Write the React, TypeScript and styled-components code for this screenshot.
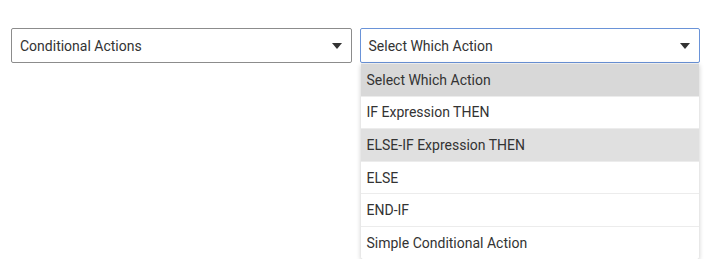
import React from 'react';
import styled, { createGlobalStyle } from 'styled-components';

const GlobalStyle = createGlobalStyle`
  body {
    margin: 0;
    background: #fff;
    font-family: Roboto, "Liberation Sans", sans-serif;
    color: #333;
  }
`;

const Page = styled.div`
  display: flex;
  align-items: flex-start;
  gap: 8px;
  padding: 28px 18px 0 11px;
`;

const Field = styled.div`
  display: flex;
  flex-direction: column;
  flex: 1;
`;

const SelectBox = styled.div<{ $open?: boolean }>`
  display: flex;
  align-items: center;
  justify-content: space-between;
  height: 35px;
  box-sizing: border-box;
  padding: 0 9px 0 8px;
  border: 1px solid ${(p) => (p.$open ? '#6a93d8' : '#8c8c8c')};
  border-radius: 2px;
  font-size: 14px;
  color: #333;
  background: #fff;
`;

const Caret = styled.span`
  width: 0;
  height: 0;
  border-left: 5.5px solid transparent;
  border-right: 5.5px solid transparent;
  border-top: 6px solid #333;
  margin-top: 1px;
`;

const Menu = styled.div`
  display: flex;
  flex-direction: column;
  margin: 0 1px;
  background: #fff;
  border-radius: 0 0 3px 3px;
  box-shadow: 0 2px 5px rgba(0, 0, 0, 0.22);
  overflow: hidden;
`;

const Option = styled.div<{ $tone?: string }>`
  height: 32.6px;
  box-sizing: border-box;
  display: flex;
  align-items: center;
  padding: 0 6px;
  font-size: 14px;
  color: #333;
  background: ${(p) =>
    p.$tone === 'selected' ? '#d8d8d8' : p.$tone === 'hover' ? '#e0e0e0' : '#fff'};
  border-top: ${(p) => (p.$tone === 'first' ? 'none' : '1px solid #ececec')};
`;

const options: { label: string; tone?: string }[] = [
  { label: 'Select Which Action', tone: 'selected' },
  { label: 'IF Expression THEN' },
  { label: 'ELSE-IF Expression THEN', tone: 'hover' },
  { label: 'ELSE' },
  { label: 'END-IF' },
  { label: 'Simple Conditional Action' },
];

const App = () => {
  return (
    <>
      <GlobalStyle />
      <Page>
        <Field>
          <SelectBox>
            <span>Conditional Actions</span>
            <Caret />
          </SelectBox>
        </Field>
        <Field>
          <SelectBox $open>
            <span>Select Which Action</span>
            <Caret />
          </SelectBox>
          <Menu>
            {options.map((o) => (
              <Option key={o.label} $tone={o.tone}>
                {o.label}
              </Option>
            ))}
          </Menu>
        </Field>
      </Page>
    </>
  );
};

export default App;
